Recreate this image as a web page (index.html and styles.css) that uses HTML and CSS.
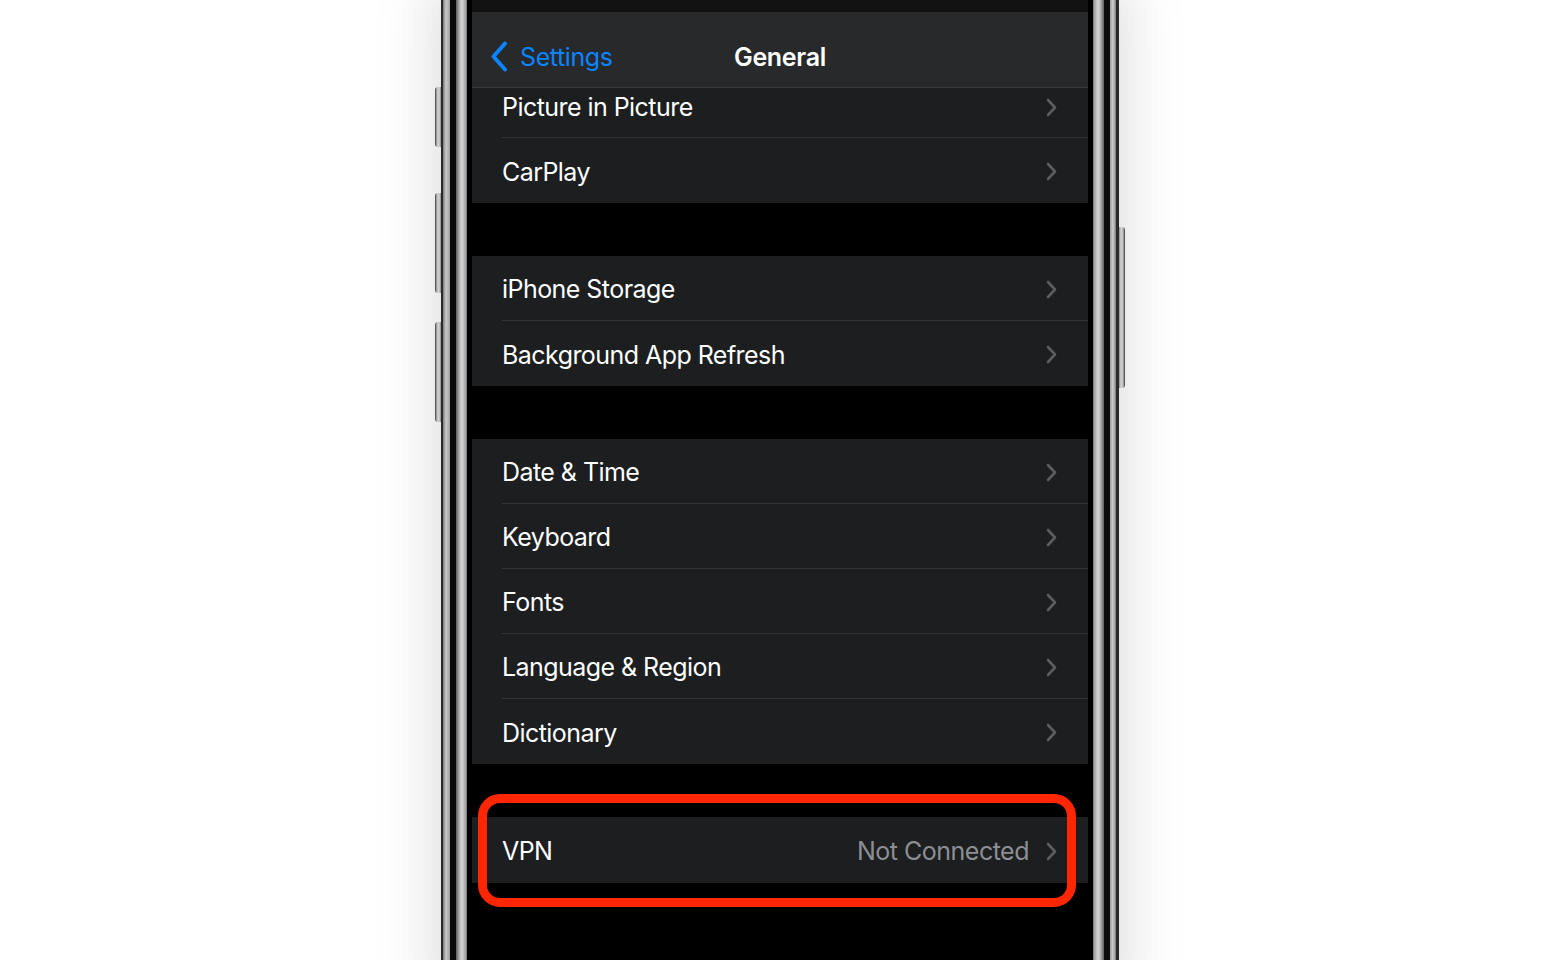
FILE: index.html
```html
<!DOCTYPE html>
<html lang="en">
<head>
<meta charset="utf-8">
<title>General</title>
<link rel="stylesheet" href="styles.css">
</head>
<body>
<div class="phone">
  <span class="btn btn-mute"></span>
  <span class="btn btn-volup"></span>
  <span class="btn btn-voldown"></span>
  <span class="btn btn-power"></span>
  <div class="band">
    <div class="rim">
      <div class="bezel">
        <div class="screen">
          <div class="topbar"></div>
          <div class="header">
            <div class="back">
              <svg class="back-chev" width="18" height="31" viewBox="0 0 18 31"><path d="M15 2.5 L3.5 15.5 L15 28.5" fill="none" stroke="#0a84ff" stroke-width="4" stroke-linecap="round" stroke-linejoin="round"/></svg>
              <span class="back-label">Settings</span>
            </div>
            <div class="title">General</div>
            <div class="spacer"></div>
          </div>

          <div class="group">
            <div class="row partial"><div class="cell"><span class="label">Picture in Picture</span><svg class="chev" width="11" height="19" viewBox="0 0 11 19"><path d="M2 2 L9 9.5 L2 17" fill="none" stroke="#5c5d61" stroke-width="2.6" stroke-linecap="round" stroke-linejoin="round"/></svg></div></div>
            <div class="row last"><div class="cell"><span class="label">CarPlay</span><svg class="chev" width="11" height="19" viewBox="0 0 11 19"><path d="M2 2 L9 9.5 L2 17" fill="none" stroke="#5c5d61" stroke-width="2.6" stroke-linecap="round" stroke-linejoin="round"/></svg></div></div>
          </div>

          <div class="group">
            <div class="row"><div class="cell"><span class="label">iPhone Storage</span><svg class="chev" width="11" height="19" viewBox="0 0 11 19"><path d="M2 2 L9 9.5 L2 17" fill="none" stroke="#5c5d61" stroke-width="2.6" stroke-linecap="round" stroke-linejoin="round"/></svg></div></div>
            <div class="row last"><div class="cell"><span class="label">Background App Refresh</span><svg class="chev" width="11" height="19" viewBox="0 0 11 19"><path d="M2 2 L9 9.5 L2 17" fill="none" stroke="#5c5d61" stroke-width="2.6" stroke-linecap="round" stroke-linejoin="round"/></svg></div></div>
          </div>

          <div class="group">
            <div class="row"><div class="cell"><span class="label">Date &amp; Time</span><svg class="chev" width="11" height="19" viewBox="0 0 11 19"><path d="M2 2 L9 9.5 L2 17" fill="none" stroke="#5c5d61" stroke-width="2.6" stroke-linecap="round" stroke-linejoin="round"/></svg></div></div>
            <div class="row"><div class="cell"><span class="label">Keyboard</span><svg class="chev" width="11" height="19" viewBox="0 0 11 19"><path d="M2 2 L9 9.5 L2 17" fill="none" stroke="#5c5d61" stroke-width="2.6" stroke-linecap="round" stroke-linejoin="round"/></svg></div></div>
            <div class="row"><div class="cell"><span class="label">Fonts</span><svg class="chev" width="11" height="19" viewBox="0 0 11 19"><path d="M2 2 L9 9.5 L2 17" fill="none" stroke="#5c5d61" stroke-width="2.6" stroke-linecap="round" stroke-linejoin="round"/></svg></div></div>
            <div class="row"><div class="cell"><span class="label">Language &amp; Region</span><svg class="chev" width="11" height="19" viewBox="0 0 11 19"><path d="M2 2 L9 9.5 L2 17" fill="none" stroke="#5c5d61" stroke-width="2.6" stroke-linecap="round" stroke-linejoin="round"/></svg></div></div>
            <div class="row last"><div class="cell"><span class="label">Dictionary</span><svg class="chev" width="11" height="19" viewBox="0 0 11 19"><path d="M2 2 L9 9.5 L2 17" fill="none" stroke="#5c5d61" stroke-width="2.6" stroke-linecap="round" stroke-linejoin="round"/></svg></div></div>
          </div>

          <div class="group vpn-group">
            <div class="row last vpn"><div class="cell"><span class="label">VPN</span><span class="value">Not Connected</span><svg class="chev" width="11" height="19" viewBox="0 0 11 19"><path d="M2 2 L9 9.5 L2 17" fill="none" stroke="#5c5d61" stroke-width="2.6" stroke-linecap="round" stroke-linejoin="round"/></svg></div></div>
            <div class="highlight"></div>
          </div>
        </div>
      </div>
    </div>
  </div>
</div>
</body>
</html>
```

FILE: styles.css
```css
html, body {
  margin: 0;
  padding: 0;
}
body {
  background: #ffffff;
  width: 1560px;
  height: 960px;
  overflow: hidden;
  font-family: Inter, "Noto Sans", "Liberation Sans", sans-serif;
}

.phone {
  position: relative;
  box-sizing: border-box;
  width: 678px;
  height: 1040px;
  margin: -20px auto 0;
  border-left: 2px solid #2a2a2a;
  border-right: 3px solid #2a2a2a;
  padding: 0 6px 0 7px;
  background:
    linear-gradient(90deg, #7a7a7a 0, #c9c9c9 3px, #a0a0a0 7px, transparent 7px,
      transparent calc(100% - 6px), #9a9a9a calc(100% - 6px), #cfcfcf calc(100% - 3px), #7a7a7a 100%);
  box-shadow: 0 0 60px rgba(0, 0, 0, 0.17);
}

.band {
  height: 100%;
  background: #0b0b0b;
  padding: 0 6px;
}

.rim {
  height: 100%;
  padding: 0 11px;
  background:
    linear-gradient(90deg, #5f5f5f 0, #bdbdbd 4px, #d6d6d6 6px, #9c9c9c 10px, #6a6a6a 11px, transparent 11px,
      transparent calc(100% - 11px), #6a6a6a calc(100% - 11px), #9c9c9c calc(100% - 10px), #d6d6d6 calc(100% - 6px), #bdbdbd calc(100% - 4px), #5f5f5f 100%);
}

.bezel {
  height: 100%;
  background: #000;
  padding: 0 5px;
}

.screen {
  position: relative;
  height: 100%;
  background: #000;
  color: #fff;
}

.topbar {
  height: 32px;
  background: #121212;
}

.header {
  box-sizing: border-box;
  height: 76px;
  background: #27292b;
  border-bottom: 1px solid #38393b;
  display: grid;
  grid-template-columns: 1fr auto 1fr;
  align-items: start;
  padding-top: 29px;
}

.back {
  display: flex;
  align-items: center;
  padding-left: 18px;
  height: 31px;
}
.back-chev {
  display: block;
  margin-right: 12px;
}
.back-label {
  color: #0a84ff;
  font-size: 25px;
  line-height: 30px;
  letter-spacing: -0.4px;
}

.title {
  font-size: 25px;
  line-height: 30px;
  font-weight: 600;
  letter-spacing: -0.3px;
  color: #ffffff;
  height: 31px;
  display: flex;
  align-items: center;
}

.group {
  background: #1c1e1f;
  margin-bottom: 53px;
  position: relative;
}

.row {
  height: 65px;
  padding-left: 30px;
}
.row.partial {
  height: 50px;
}
.row.partial .cell {
  align-items: flex-start;
  padding-top: 4px;
}
.row.partial .chev {
  margin-top: 6px;
}
.vpn-group .row {
  height: 66px;
}

.cell {
  height: 100%;
  box-sizing: border-box;
  border-bottom: 1px solid #323436;
  display: flex;
  align-items: center;
  padding-top: 2px;
  padding-right: 31px;
}
.row.last .cell {
  border-bottom: none;
}

.label {
  flex: 1;
  font-size: 25px;
  line-height: 30px;
  letter-spacing: -0.55px;
  color: #ffffff;
}
.value {
  font-size: 25px;
  line-height: 30px;
  letter-spacing: -0.5px;
  color: #8d8e93;
  margin-right: 17px;
}
.chev {
  display: block;
  flex: none;
}

.highlight {
  position: absolute;
  left: 6px;
  top: -23px;
  width: 598px;
  height: 113px;
  box-sizing: border-box;
  border: 9px solid #ff2600;
  border-radius: 22px;
}

.btn {
  position: absolute;
  width: 6px;
  background: linear-gradient(90deg, #3a3a3a 0, #bcbcbc 2px, #d8d8d8 4px, #8a8a8a 6px);
  border-radius: 3px 0 0 3px;
}
.btn-mute { left: -8px; top: 107px; height: 60px; }
.btn-volup { left: -8px; top: 213px; height: 100px; }
.btn-voldown { left: -8px; top: 342px; height: 100px; }
.btn-power {
  right: -9px;
  top: 247px;
  height: 161px;
  border-radius: 0 3px 3px 0;
  background: linear-gradient(90deg, #8a8a8a 0, #d8d8d8 2px, #bcbcbc 4px, #3a3a3a 6px);
}
```
